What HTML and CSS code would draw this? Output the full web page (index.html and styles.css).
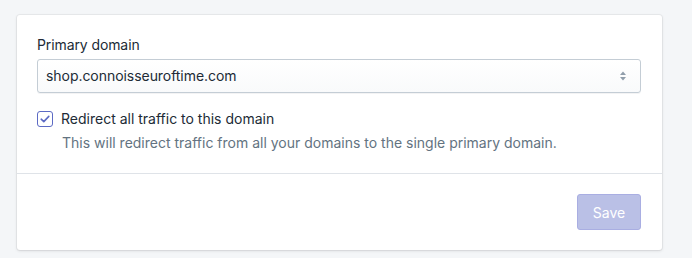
FILE: index.html
```html
<!DOCTYPE html>
<html>
<head>
<meta charset="utf-8">
<link rel="stylesheet" href="styles.css">
</head>
<body>
<div class="page">
  <div class="card">
    <div class="section">
      <div class="label">Primary domain</div>
      <div class="select">
        <span class="select-value">shop.connoisseuroftime.com</span>
        <svg class="arrows" width="8" height="12" viewBox="0 0 8 12">
          <path d="M4 1.5 L7 5 H1 Z" fill="#919eab"/>
          <path d="M4 10.5 L7 7 H1 Z" fill="#919eab"/>
        </svg>
      </div>
      <div class="check-row">
        <span class="checkbox">
          <svg width="10" height="8" viewBox="0 0 10 8">
            <path d="M1.2 4.2 L3.8 6.6 L8.8 1.4" fill="none" stroke="#5c6ac4" stroke-width="1.6" stroke-linecap="round" stroke-linejoin="round"/>
          </svg>
        </span>
        <span class="check-label">Redirect all traffic to this domain</span>
      </div>
      <div class="help">This will redirect traffic from all your domains to the single primary domain.</div>
    </div>
    <div class="footer">
      <button class="save">Save</button>
    </div>
  </div>
</div>
</body>
</html>
```
FILE: styles.css
```css
html, body {
  margin: 0;
  padding: 0;
  background: #f4f6f8;
}
body {
  font-family: Inter, "Noto Sans", sans-serif;
  font-size: 14px;
  line-height: 20px;
  color: #212b36;
}
.page {
  padding: 15px 29px 9px 17px;
}
.card {
  width: 645px;
  background: #fff;
  border-radius: 3px;
  box-shadow: 0 0 0 1px rgba(63,63,68,0.06), 0 1px 3px 0 rgba(63,63,68,0.15);
}
.section {
  padding: 20px 21px 20px 20px;
  border-bottom: 1px solid #dfe3e8;
}
.label {
  margin-bottom: 4px;
  font-size: 14px;
  letter-spacing: -0.1px;
}
.select {
  box-sizing: border-box;
  height: 34px;
  border: 1px solid #c4cdd5;
  border-radius: 3px;
  background: linear-gradient(#fff, #f9fafb);
  box-shadow: 0 1px 0 0 rgba(22,29,37,0.05);
  display: flex;
  align-items: center;
  justify-content: space-between;
  padding: 0 13px 0 8px;
}
.select-value {
  letter-spacing: -0.05px;
}
.arrows {
  display: block;
}
.check-row {
  margin-top: 16px;
  display: flex;
  align-items: center;
  gap: 8px;
}
.checkbox {
  box-sizing: border-box;
  width: 16px;
  height: 16px;
  border: 1px solid #5c6ac4;
  border-radius: 3px;
  background: #fff;
  display: flex;
  align-items: center;
  justify-content: center;
}
.help {
  margin-top: 4px;
  padding-left: 25px;
  color: #637381;
}
.footer {
  padding: 20px 21px 20px 20px;
  display: flex;
  justify-content: flex-end;
}
.save {
  box-sizing: border-box;
  height: 36px;
  width: 64px;
  font-family: Inter, "Noto Sans", sans-serif;
  font-size: 14px;
  color: #fff;
  background: #bac0e6;
  border: 1px solid #a9aee2;
  border-radius: 3px;
  padding: 0;
}
```
